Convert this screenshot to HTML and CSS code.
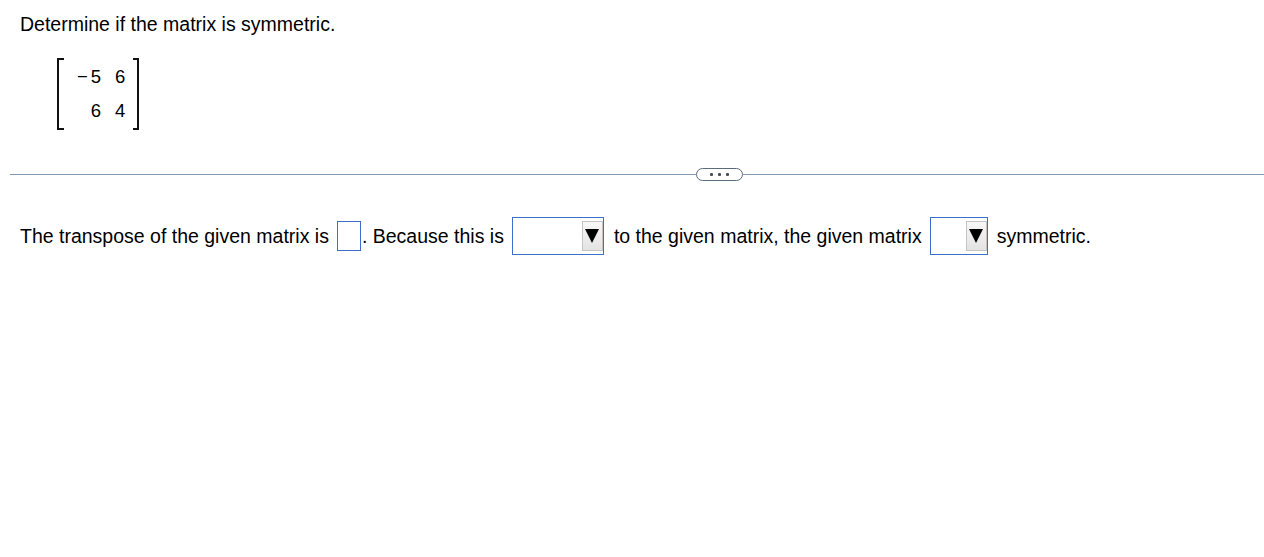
FILE: index.html
```html
<!DOCTYPE html>
<html lang="en">
<head>
<meta charset="utf-8">
<title>Symmetric matrix</title>
<link rel="stylesheet" href="styles.css">
</head>
<body>
<div class="page">
  <p class="prompt">Determine if the matrix is symmetric.</p>
  <div class="matrix">
    <span class="bracket left"></span>
    <div class="cells">
      <span><span class="minus">−</span>5</span>
      <span>6</span>
      <span>6</span>
      <span>4</span>
    </div>
    <span class="bracket right"></span>
  </div>
  <div class="divider">
    <span class="line line-left"></span>
    <span class="pill"><i></i><i></i><i></i></span>
    <span class="line line-right"></span>
  </div>
  <div class="answer">
    <span class="txt">The transpose of the given matrix is</span>
    <span class="box"></span>
    <span class="txt after-box">. Because this is</span>
    <span class="select wide"><span class="btn"><span class="tri"></span></span></span>
    <span class="txt after-sel">to the given matrix, the given matrix</span>
    <span class="select narrow"><span class="btn"><span class="tri"></span></span></span>
    <span class="txt after-sel2">symmetric.</span>
  </div>
</div>
</body>
</html>
```
FILE: styles.css
```css
html, body {
  margin: 0;
  padding: 0;
  background: #fff;
}
body {
  font-family: "Liberation Sans", Arial, sans-serif;
  color: #000;
}
.prompt {
  margin: 13px 0 0 20px;
  font-size: 19.5px;
  line-height: 22px;
}
.matrix {
  display: flex;
  width: fit-content;
  margin: 23px 0 0 57px;
  height: 72px;
}
.bracket {
  box-sizing: border-box;
  height: 72px;
  border-top: 2px solid #111;
  border-bottom: 2px solid #111;
}
.bracket.left {
  width: 7px;
  border-left: 2px solid #111;
}
.bracket.right {
  width: 6px;
  border-right: 2px solid #111;
}
.cells {
  display: grid;
  grid-template-columns: auto auto;
  column-gap: 14px;
  justify-items: end;
  padding: 2px 8px 2px 13px;
  font-size: 18.5px;
  line-height: 34px;
}
.minus {
  margin-right: 3px;
}
.divider {
  display: flex;
  align-items: center;
  margin: 37px 0 0 10px;
  height: 14px;
}
.line {
  height: 1px;
  background: #8497b3;
}
.line-left {
  flex: 0 0 686px;
}
.line-right {
  flex: 1 1 auto;
}
.pill {
  box-sizing: border-box;
  width: 47px;
  height: 13px;
  border: 1px solid #5d6b7e;
  border-radius: 7px;
  display: flex;
  align-items: center;
  justify-content: center;
  gap: 5px;
}
.pill i {
  width: 3px;
  height: 3px;
  background: #4a4f57;
  border-radius: 1px;
}
.answer {
  display: flex;
  align-items: center;
  height: 38px;
  margin: 36px 0 0 20px;
  font-size: 19.5px;
  line-height: 22px;
}
.box {
  box-sizing: border-box;
  width: 24px;
  height: 30px;
  margin-left: 8px;
  border: 1px solid #3a6fd0;
}
.after-box {
  margin-left: 1px;
}
.select {
  box-sizing: border-box;
  height: 38px;
  border: 1px solid #3a6fd0;
  display: flex;
  align-items: center;
  justify-content: flex-end;
}
.select.wide {
  width: 92px;
  margin-left: 8px;
}
.select.narrow {
  width: 58px;
  margin-left: 8px;
}
.btn {
  box-sizing: border-box;
  width: 21px;
  height: 30px;
  border: 1px solid #c4c4c4;
  background: linear-gradient(#f7f7f7, #e3e3e3);
  display: flex;
  align-items: center;
  justify-content: center;
}
.tri {
  width: 0;
  height: 0;
  border-left: 7px solid transparent;
  border-right: 7px solid transparent;
  border-top: 14px solid #000;
}
.after-sel {
  margin-left: 10px;
}
.after-sel2 {
  margin-left: 9px;
}
```
